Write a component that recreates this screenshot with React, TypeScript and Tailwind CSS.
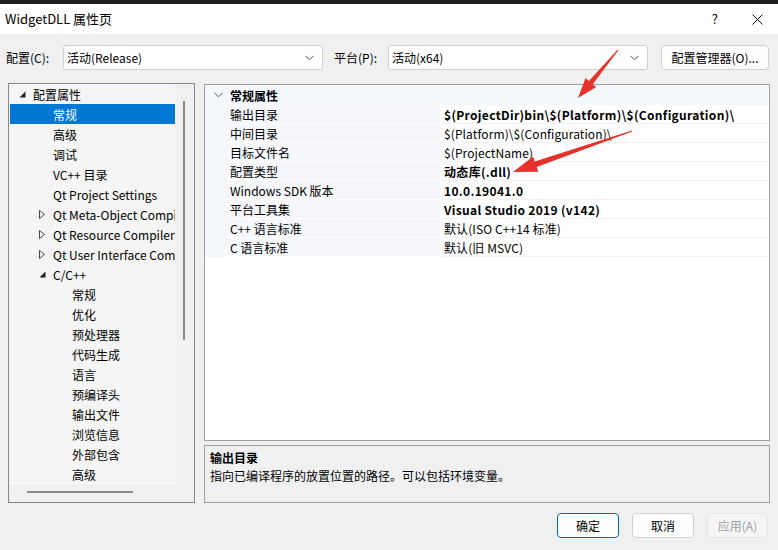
import React from 'react';

type TreeItem = { label: string; level: 0 | 1 | 2; expander?: 'open' | 'closed'; selected?: boolean };

const tree: TreeItem[] = [
  { label: '配置属性', level: 0, expander: 'open' },
  { label: '常规', level: 1, selected: true },
  { label: '高级', level: 1 },
  { label: '调试', level: 1 },
  { label: 'VC++ 目录', level: 1 },
  { label: 'Qt Project Settings', level: 1 },
  { label: 'Qt Meta-Object Compiler', level: 1, expander: 'closed' },
  { label: 'Qt Resource Compiler', level: 1, expander: 'closed' },
  { label: 'Qt User Interface Compiler', level: 1, expander: 'closed' },
  { label: 'C/C++', level: 1, expander: 'open' },
  { label: '常规', level: 2 },
  { label: '优化', level: 2 },
  { label: '预处理器', level: 2 },
  { label: '代码生成', level: 2 },
  { label: '语言', level: 2 },
  { label: '预编译头', level: 2 },
  { label: '输出文件', level: 2 },
  { label: '浏览信息', level: 2 },
  { label: '外部包含', level: 2 },
  { label: '高级', level: 2 },
];

const props: { name: string; value: string; bold?: boolean }[] = [
  { name: '输出目录', value: '$(ProjectDir)bin\\$(Platform)\\$(Configuration)\\', bold: true },
  { name: '中间目录', value: '$(Platform)\\$(Configuration)\\' },
  { name: '目标文件名', value: '$(ProjectName)' },
  { name: '配置类型', value: '动态库(.dll)', bold: true },
  { name: 'Windows SDK 版本', value: '10.0.19041.0', bold: true },
  { name: '平台工具集', value: 'Visual Studio 2019 (v142)', bold: true },
  { name: 'C++ 语言标准', value: '默认(ISO C++14 标准)' },
  { name: 'C 语言标准', value: '默认(旧 MSVC)' },
];

const Chevron = ({ className = '' }: { className?: string }) => (
  <svg width="9" height="6" viewBox="0 0 9 6" className={className}>
    <path d="M0.5 0.8 L4.5 4.8 L8.5 0.8" fill="none" stroke="#555" strokeWidth="1" />
  </svg>
);

const Expander = ({ kind }: { kind: 'open' | 'closed' }) =>
  kind === 'open' ? (
    <svg width="7" height="7" viewBox="0 0 7 7">
      <path d="M6.5 0.5 L6.5 6.5 L0.5 6.5 Z" fill="#222" />
    </svg>
  ) : (
    <svg width="6" height="9" viewBox="0 0 6 9">
      <path d="M0.5 0.5 L5.5 4.5 L0.5 8.5 Z" fill="none" stroke="#444" strokeWidth="1" />
    </svg>
  );

const ComboBox = ({ value, width }: { value: string; width: string }) => (
  <div className={`${width} flex h-[25px] shrink-0 items-center justify-between rounded-[3px] border border-[#d0d0d0] bg-white pl-[3px] pr-[8px]`}>
    <span className="pt-[1px]">{value}</span>
    <Chevron />
  </div>
);

export default function App() {
  return (
    <div
      className="relative h-[550px] w-[778px] overflow-hidden bg-[#f0f0f0] text-[12px] text-black"
      style={{ fontFamily: '"Noto Sans CJK SC", "Noto Sans", sans-serif' }}
    >
      <div className="h-[4px] bg-[#1f1f1f]" />

      {/* title bar */}
      <div className="flex h-[30px] items-center justify-between bg-white pl-[5px] pr-[15px]">
        <span className="text-[13px]">WidgetDLL 属性页</span>
        <div className="flex items-center gap-[34px]">
          <span className="text-[13px]">?</span>
          <svg width="11" height="11" viewBox="0 0 11 11">
            <path d="M0.5 0.5 L10.5 10.5 M10.5 0.5 L0.5 10.5" stroke="#111" strokeWidth="1" />
          </svg>
        </div>
      </div>

      {/* configuration row */}
      <div className="flex items-center pl-[6px] pt-[11px]">
        <span className="w-[57px] shrink-0 pt-[1px]">配置(C):</span>
        <ComboBox value="活动(Release)" width="w-[260px]" />
        <span className="ml-[11px] w-[54px] shrink-0 pt-[1px]">平台(P):</span>
        <ComboBox value="活动(x64)" width="w-[260px]" />
        <button className="ml-[13px] flex h-[25px] w-[108px] shrink-0 items-center justify-center rounded-[4px] border border-[#d0d0d0] bg-[#fdfdfd] pt-[1px]">
          配置管理器(O)...
        </button>
      </div>

      {/* main area */}
      <div className="mt-[13px] flex pl-[8px]">
        {/* tree */}
        <div className="flex h-[420px] w-[187px] shrink-0 flex-col border border-[#828790]">
          <div className="flex h-[400px]">
            <div className="w-[166px] shrink-0 overflow-hidden border-b border-white bg-[#f5f5f5]">
              {tree.map((t, i) => (
                <div
                  key={i}
                  className={`relative flex h-[20px] items-center whitespace-nowrap ${
                    t.selected ? 'ml-[1px] bg-[#0078d4] text-white' : ''
                  }`}
                >
                  {t.expander && (
                    <span
                      className={`absolute flex items-center ${t.level === 0 ? 'left-[10px]' : 'left-[30px]'}`}
                    >
                      <Expander kind={t.expander} />
                    </span>
                  )}
                  <span
                    className={`pt-[1px] ${
                      t.level === 0 ? 'pl-[24px]' : t.level === 1 ? (t.selected ? 'pl-[43px]' : 'pl-[44px]') : 'pl-[63px]'
                    }`}
                  >
                    {t.label}
                  </span>
                </div>
              ))}
            </div>
            <div className="flex-1 pl-[8px] pt-[17px]">
              <div className="h-[239px] w-[2px] bg-[#8a8a8a]" />
            </div>
          </div>
          <div className="flex-1 pl-[18px] pt-[7px]">
            <div className="h-[2px] w-[106px] bg-[#8a8a8a]" />
          </div>
        </div>

        {/* right column */}
        <div className="ml-[9px] mt-[1px] flex w-[566px] shrink-0 flex-col gap-[4px]">
          <div className="h-[357px] overflow-hidden border border-[#a0a0a0] bg-white">
            <div className="flex h-[20px] items-center bg-[#f4f7fc]">
              <span className="flex w-[25px] justify-center pl-[2px]">
                <Chevron />
              </span>
              <span className="pt-[1px] font-bold">常规属性</span>
            </div>
            {props.map((p) => (
              <div key={p.name} className="flex h-[19px]">
                <div className="w-[21px] shrink-0 bg-[#f4f7fc]" />
                <div className="flex w-[214px] shrink-0 items-center border-b border-white bg-[#f6f7fa] pl-[4px] pt-[1px]">
                  {p.name}
                </div>
                <div className="w-[1px] shrink-0 bg-white" />
                <div
                  className={`flex min-w-0 flex-1 items-center border-b border-[#f2f2f4] pl-[3px] pt-[1px] whitespace-nowrap ${
                    p.bold ? 'font-bold tracking-[0.33px]' : 'tracking-[0.1px]'
                  }`}
                >
                  {p.value}
                </div>
              </div>
            ))}
          </div>

          <div className="h-[58px] overflow-hidden border border-[#a0a0a0] bg-[#f0f0f0] px-[5px] pt-[3px]">
            <div className="h-[18px] font-bold leading-[18px]">输出目录</div>
            <div className="h-[18px] leading-[18px]">指向已编译程序的放置位置的路径。可以包括环境变量。</div>
          </div>
        </div>
      </div>

      {/* buttons */}
      <div className="mt-[10px] flex justify-end gap-[13px] pr-[10px]">
        <button className="h-[25px] w-[62px] rounded-[4px] border border-[#0067c0] bg-[#fdfdfd] pt-[1px]">确定</button>
        <button className="h-[25px] w-[62px] rounded-[4px] border border-[#d0d0d0] bg-[#fdfdfd] pt-[1px]">取消</button>
        <button className="h-[25px] w-[61px] rounded-[4px] border border-[#e5e5e5] bg-[#f5f5f5] pt-[1px] text-[#a0a0a0]">
          应用(A)
        </button>
      </div>

      {/* red annotation arrows */}
      <svg className="pointer-events-none absolute left-0 top-0" width="778" height="550">
        <polygon
          points="618.4,50.3 592.7,84.2 596.2,87.1 578,98 585.4,78.2 588.9,81.0 617.6,49.7"
          fill="#e5322b"
        />
        <polygon
          points="632.2,131.5 536.7,167.0 538.3,171.8 513,172 533.1,156.6 534.7,161.4 631.8,130.5"
          fill="#e5322b"
        />
      </svg>
    </div>
  );
}
